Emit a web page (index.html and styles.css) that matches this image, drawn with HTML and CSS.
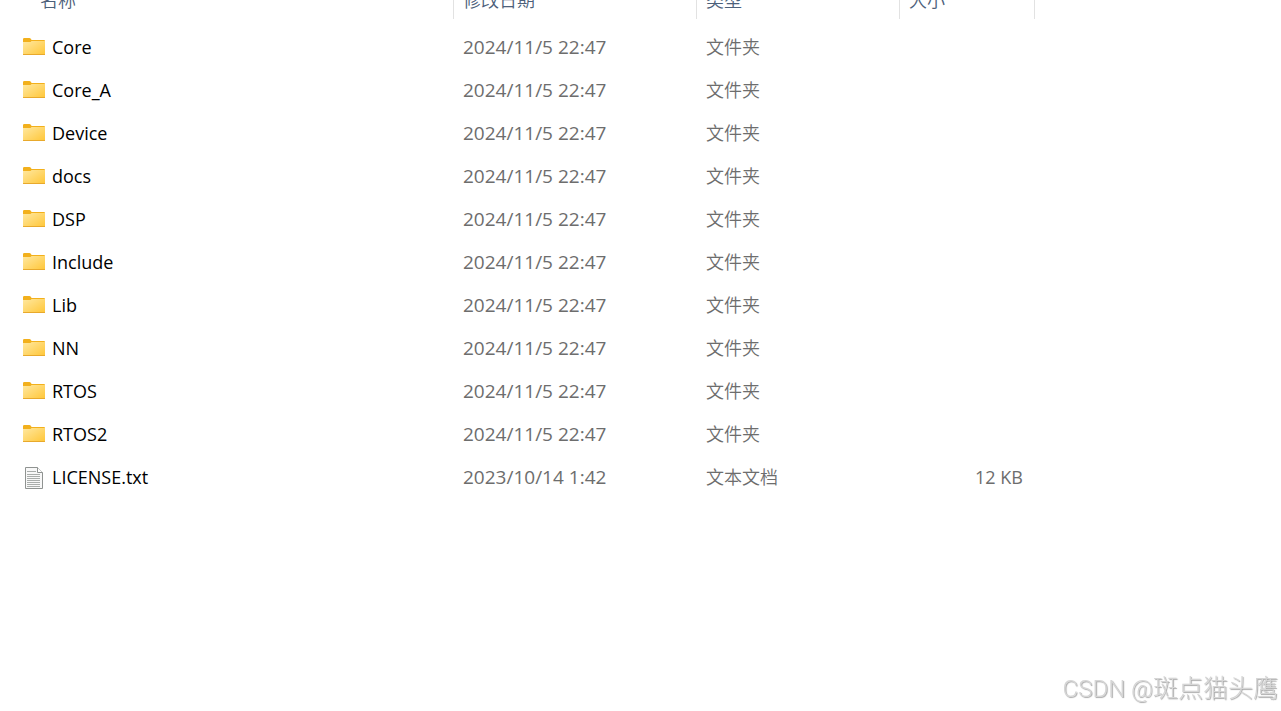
FILE: index.html
```html
<!DOCTYPE html>
<html lang="zh-CN">
<head>
<meta charset="utf-8">
<meta name="viewport" content="width=device-width, initial-scale=1">
<title>文件夹</title>
<link rel="stylesheet" href="styles.css">
</head>
<body>
<svg class="sprite" aria-hidden="true">
  <defs>
    <linearGradient id="folder-fill" x1="0" y1="0" x2="1" y2="1">
      <stop offset="0" stop-color="#ffe8a0"/>
      <stop offset="1" stop-color="#ffc637"/>
    </linearGradient>
    <symbol id="folder" viewBox="0 0 22 18">
      <path d="M0 1.2Q0 0 1.2 0H6.4Q7.2 0 7.6.6L8.6 2H21Q22 2 22 3V8H0Z" fill="#f2b01c"/>
      <path d="M0 4H7Q7.6 4 8 3.5L8.6 3H22V16.5Q22 17 21.4 17H.6Q0 17 0 16.5Z" fill="url(#folder-fill)"/>
      <path d="M0 16H22V16.4Q22 17 21.3 17H.7Q0 17 0 16.4Z" fill="#e8a92c"/>
    </symbol>
    <symbol id="document" viewBox="0 0 18 22">
      <path d="M.5.5H12.5L17.5 5.5V21.5H.5Z" fill="#f8f8f8" stroke="#8f9391"/>
      <path d="M12.5.5V5.5H17.5" fill="#fff" stroke="#8f9391"/>
      <path d="M2 4.5H11M2 7.5H15M2 9.5H15M2 11.5H15M2 13.5H15M2 15.5H15M2 17.5H15M2 19.5H15" stroke="#a9adab"/>
    </symbol>
  </defs>
</svg>
<main class="explorer">
  <table class="files">
    <colgroup>
      <col class="col-name"><col class="col-date"><col class="col-type"><col class="col-size"><col>
    </colgroup>
    <thead>
      <tr>
        <th scope="col"><span class="heading heading-name">名称</span></th>
        <th scope="col"><span class="heading">修改日期</span></th>
        <th scope="col"><span class="heading">类型</span></th>
        <th scope="col"><span class="heading">大小</span></th>
        <td></td>
      </tr>
    </thead>
    <tbody>
      <tr><td class="name"><svg class="icon"><use href="#folder"/></svg>Core</td><td class="date">2024/11/5 22:47</td><td>文件夹</td><td></td><td></td></tr>
      <tr><td class="name"><svg class="icon"><use href="#folder"/></svg>Core_A</td><td class="date">2024/11/5 22:47</td><td>文件夹</td><td></td><td></td></tr>
      <tr><td class="name"><svg class="icon"><use href="#folder"/></svg>Device</td><td class="date">2024/11/5 22:47</td><td>文件夹</td><td></td><td></td></tr>
      <tr><td class="name"><svg class="icon"><use href="#folder"/></svg>docs</td><td class="date">2024/11/5 22:47</td><td>文件夹</td><td></td><td></td></tr>
      <tr><td class="name"><svg class="icon"><use href="#folder"/></svg>DSP</td><td class="date">2024/11/5 22:47</td><td>文件夹</td><td></td><td></td></tr>
      <tr><td class="name"><svg class="icon"><use href="#folder"/></svg>Include</td><td class="date">2024/11/5 22:47</td><td>文件夹</td><td></td><td></td></tr>
      <tr><td class="name"><svg class="icon"><use href="#folder"/></svg>Lib</td><td class="date">2024/11/5 22:47</td><td>文件夹</td><td></td><td></td></tr>
      <tr><td class="name"><svg class="icon"><use href="#folder"/></svg>NN</td><td class="date">2024/11/5 22:47</td><td>文件夹</td><td></td><td></td></tr>
      <tr><td class="name"><svg class="icon"><use href="#folder"/></svg>RTOS</td><td class="date">2024/11/5 22:47</td><td>文件夹</td><td></td><td></td></tr>
      <tr><td class="name"><svg class="icon"><use href="#folder"/></svg>RTOS2</td><td class="date">2024/11/5 22:47</td><td>文件夹</td><td></td><td></td></tr>
      <tr><td class="name"><svg class="icon icon-document"><use href="#document"/></svg>LICENSE.txt</td><td class="date">2023/10/14 1:42</td><td>文本文档</td><td class="size">12 KB</td><td></td></tr>
    </tbody>
  </table>
</main>
<div class="watermark"><span class="watermark-site">CSDN @</span>斑点猫头鹰</div>
</body>
</html>
```

FILE: styles.css
```css
body {
  margin: 0;
  background: #fff;
  color: #6d6d6d;
  font-family: "Open Sans", "Noto Sans CJK SC", sans-serif;
  font-size: 18px;
  line-height: 24px;
}

.sprite {
  position: absolute;
  width: 0;
  height: 0;
}

.explorer {
  min-height: 100vh;
  overflow: hidden;
}

/* The heading row is scrolled half out of view. */
.files {
  width: 100%;
  margin-top: -19px;
  border-collapse: collapse;
  table-layout: fixed;
}

.col-name { width: 454px; }
.col-date { width: 243px; }
.col-type { width: 203px; }
.col-size { width: 135px; }

.files th {
  padding: 0 0 6px;
  font-weight: 350;
  text-align: left;
}

.heading {
  display: block;
  padding: 7px 9px;
  border-right: 1px solid #e2e2e2;
  color: #4c607a;
}

.heading-name {
  padding-left: 40px;
}

.files tbody td {
  height: 43px;
  padding: 0 9px;
  font-weight: 350;
  white-space: nowrap;
}

.files tbody .name {
  padding-left: 23px;
  color: #000;
  font-weight: 400;
}

.files tbody .date {
  font-size: 19px;
  font-weight: 400;
}

.files tbody .size {
  padding-right: 12px;
  font-weight: 400;
  text-align: right;
}

.icon {
  width: 22px;
  height: 18px;
  margin-right: 7px;
  vertical-align: -2px;
}

.icon-document {
  width: 18px;
  height: 22px;
  margin: 0 9px 0 2px;
  vertical-align: -5px;
}

.watermark {
  position: fixed;
  right: 3px;
  bottom: 4px;
  color: #d6d6d6;
  font-family: "Noto Sans CJK SC", sans-serif;
  font-size: 25px;
  font-weight: 300;
  line-height: 36px;
  text-shadow: 1px 1px 1px #a8a8a8;
}

.watermark-site {
  font-family: Roboto, sans-serif;
  font-size: 24px;
}
```
